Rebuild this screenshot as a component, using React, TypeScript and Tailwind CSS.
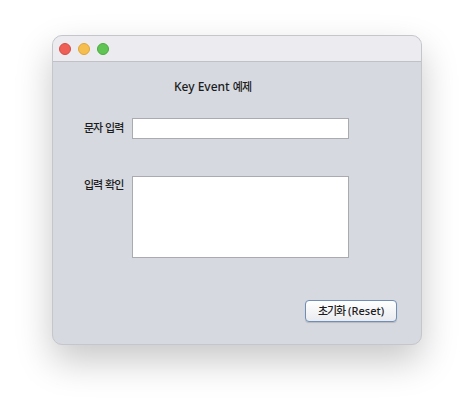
import React, { useState } from "react";

const TrafficLights = () => (
  <div className="flex items-center gap-[7px] pl-[6px]">
    <span className="w-[12px] h-[12px] rounded-full bg-[#ed5f57] border border-[#d84b43]" />
    <span className="w-[12px] h-[12px] rounded-full bg-[#f5be4f] border border-[#dfa438]" />
    <span className="w-[12px] h-[12px] rounded-full bg-[#5fc453] border border-[#4aab3e]" />
  </div>
);

export default function App() {
  const [text, setText] = useState("");
  const [log, setLog] = useState("");

  return (
    <div
      className="w-[474px] h-[414px] bg-white pt-[35px] pl-[52px]"
      style={{ fontFamily: '"Noto Sans", "Noto Sans CJK KR", sans-serif' }}
    >
      <div className="w-[370px] h-[310px] rounded-[10px] bg-[#d6d9e0] border border-[#c4c6cb] shadow-[0_16px_36px_rgba(0,0,0,0.22)] overflow-hidden flex flex-col">
        <div className="h-[26px] bg-[#ebebf0] border-b border-[#bfc1c6] flex items-center">
          <TrafficLights />
        </div>

        <div className="flex-1 flex flex-col">
          <div className="mt-[16px] ml-[121px] text-[12px] leading-[18px] text-[#1c1c1c] font-medium">
            Key Event <span className="text-[11px] tracking-[-1px]">예제</span>
          </div>

          <div className="mt-[22px] flex items-center">
            <span className="ml-[31px] w-[48px] whitespace-nowrap text-[11px] tracking-[-1px] [word-spacing:1px] text-[#1c1c1c] font-medium">
              문자 입력
            </span>
            <input
              value={text}
              onChange={(e) => setText(e.target.value)}
              onKeyUp={(e) => setLog((l) => l + e.key + "\n")}
              className="w-[217px] h-[21px] bg-white border border-[#a9abb0] outline-none px-1 text-[12px]"
            />
          </div>

          <div className="mt-[37px] flex items-start">
            <span className="ml-[31px] w-[48px] whitespace-nowrap text-[11px] tracking-[-1px] [word-spacing:1px] leading-[16px] mt-[1px] text-[#1c1c1c] font-medium">
              입력 확인
            </span>
            <textarea
              value={log}
              readOnly
              className="w-[217px] h-[82px] bg-white border border-[#a9abb0] outline-none resize-none text-[12px] p-1"
            />
          </div>

          <div className="mt-[39px] ml-[252px]">
            <button
              onClick={() => {
                setText("");
                setLog("");
              }}
              className="w-[92px] h-[22px] rounded-[4px] border border-[#6f8db5] bg-gradient-to-b from-white to-[#e9ebef] shadow-[0_1px_1px_rgba(0,0,0,0.15)] text-[11px] leading-[18px] text-[#1c1c1c] font-medium"
            >
              <span className="tracking-[-1px]">초기화</span> (Reset)
            </button>
          </div>
        </div>
      </div>
    </div>
  );
}
